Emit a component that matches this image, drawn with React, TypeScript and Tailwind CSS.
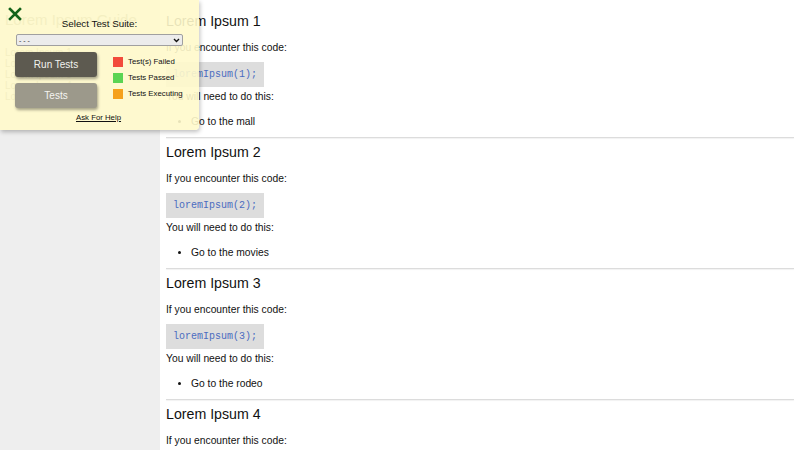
import * as React from "react";

const sections = [
  { n: 1, todo: "Go to the mall" },
  { n: 2, todo: "Go to the movies" },
  { n: 3, todo: "Go to the rodeo" },
  { n: 4, todo: "Go to the zoo" },
];

const legend = [
  { color: "bg-[#f24b3b]", label: "Test(s) Failed" },
  { color: "bg-[#5bd453]", label: "Tests Passed" },
  { color: "bg-[#f5a11c]", label: "Tests Executing" },
];

function Section({ n, todo, first }: { n: number; todo: string; first: boolean }) {
  return (
    <section>
      {!first && <hr className="border-0 h-px bg-[#dcdcdc] shadow-[0_1px_1px_rgba(0,0,0,0.06)]" />}
      <h2 className={`text-[14.2px] leading-[20px] text-[#111] ${first ? "mt-[11px]" : "mt-[4px]"}`}>
        Lorem Ipsum {n}
      </h2>
      <p className="mt-[11px] text-[10.3px] leading-[12px] text-[#111]">If you encounter this code:</p>
      <div className="mt-[8px] inline-block bg-[#dddddd] px-[7px] h-[25px] leading-[25px] font-['Liberation_Mono',monospace] text-[10px] text-[#4a6cc0]">
        loremIpsum({n});
      </div>
      <p className="mt-[4px] text-[10.3px] leading-[12px] text-[#111]">You will need to do this:</p>
      <ul className="mt-[13px] pl-[25px] list-disc text-[10.3px] leading-[12px] text-[#111]">
        <li>{todo}</li>
      </ul>
      <div className="h-[9px]" />
    </section>
  );
}

function TestPanel() {
  return (
    <div className="absolute left-0 top-0 w-[199px] h-[130px] bg-[#fffacb]/90 rounded-br-[4px] shadow-[1px_2px_4px_rgba(0,0,0,0.25)]">
      <div className="flex items-start">
        <svg width="14" height="14" viewBox="0 0 14 14" className="ml-[8px] mt-[7px]">
          <path d="M2 2 L12 12 M12 2 L2 12" stroke="#14631a" strokeWidth="2.6" strokeLinecap="square" />
        </svg>
        <div className="flex-1 mr-[22px] mt-[18px] text-center text-[9.8px] leading-[12px] text-[#111]">
          Select Test Suite:
        </div>
      </div>
      <div className="mx-[16px] mt-[4px] h-[12px] flex items-center justify-between bg-[#ececec] border border-[#a0a0a0] rounded-[2px] px-[2px]">
        <span className="text-[7px] leading-none text-[#333]">- - -</span>
        <svg width="7" height="5" viewBox="0 0 7 5">
          <path d="M1 1 L3.5 3.5 L6 1" stroke="#111" strokeWidth="1.4" fill="none" />
        </svg>
      </div>
      <div className="flex mt-[6px] ml-[15px]">
        <div className="flex flex-col gap-[6px]">
          <div className="w-[82px] h-[25px] flex items-center justify-center rounded-[3px] bg-[#5d5a50] text-[10px] text-[#f2f2ee] shadow-[1px_2px_3px_rgba(0,0,0,0.35)]">
            Run Tests
          </div>
          <div className="w-[82px] h-[25px] flex items-center justify-center rounded-[3px] bg-[#9c998b] text-[10px] text-[#f4f4f0] shadow-[1px_2px_3px_rgba(0,0,0,0.35)]">
            Tests
          </div>
        </div>
        <div className="ml-[16px] mt-[4px] flex flex-col gap-[5px]">
          {legend.map((l) => (
            <div key={l.label} className="flex items-center h-[11px]">
              <div className={`w-[10px] h-[10px] ${l.color}`} />
              <span className="ml-[5px] text-[7.8px] leading-none text-[#111]">{l.label}</span>
            </div>
          ))}
        </div>
      </div>
      <div className="mt-[5px] text-center text-[7.8px] leading-[10px] text-[#111] underline pr-[2px]">Ask For Help</div>
    </div>
  );
}

export default function App() {
  return (
    <div className="relative flex h-[450px] w-[800px] overflow-hidden bg-white font-['Liberation_Sans',Arial,sans-serif]">
      <aside className="w-[160px] shrink-0 bg-[#eeeeee] px-[5px]">
        <h1 className="mt-[10px] text-[15px] leading-[20px] text-[#8a8a6a]">Lorem Ipsum Guide</h1>
        <ul className="mt-[17px] text-[10px] leading-[11px] text-[#8a8a6a]">
          {sections.concat([{ n: 5, todo: "" }]).map((s) => (
            <li key={s.n}>Lorem Ipsum {s.n}</li>
          ))}
        </ul>
      </aside>
      <main className="flex-1 min-w-0 pl-[6px] pr-[6px]">
        {sections.map((s, i) => (
          <Section key={s.n} n={s.n} todo={s.todo} first={i === 0} />
        ))}
      </main>
      <TestPanel />
    </div>
  );
}
